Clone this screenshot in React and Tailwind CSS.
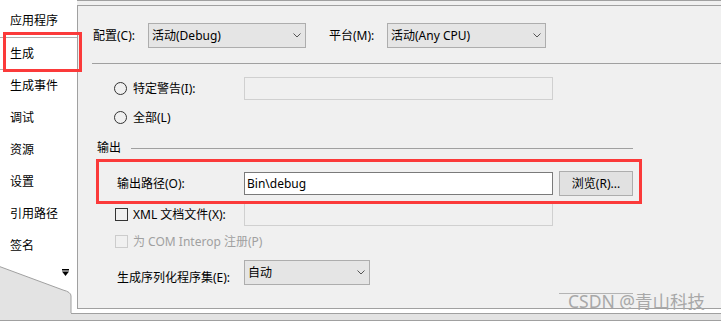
import React from 'react'

const FONT = { fontFamily: '"Noto Sans", "Noto Sans CJK SC", sans-serif' }

const NAV = ['应用程序', '生成', '生成事件', '调试', '资源', '设置', '引用路径', '签名']

function Chevron() {
  return (
    <svg width="8" height="5" viewBox="0 0 8 5" className="shrink-0">
      <polyline points="0.5,0.5 4,4 7.5,0.5" fill="none" stroke="#555" strokeWidth="1" />
    </svg>
  )
}

function Combo({ w, text }) {
  return (
    <div className={`${w} h-[25px] flex items-center justify-between pl-[3px] pr-[4px] bg-[#e5e5e5] border border-[#adadad] shrink-0`}>
      <span className="text-[12px] leading-none text-black">{text}</span>
      <Chevron />
    </div>
  )
}

function TextBox({ value, disabled }) {
  return (
    <div className={`w-[309px] h-[23px] flex items-center pl-[2px] shrink-0 border ${disabled ? 'bg-[#f0f0f0] border-[#d0d0d0]' : 'bg-white border-[#7a7a7a]'}`}>
      <span className="text-[12px] leading-none text-black">{value}</span>
    </div>
  )
}

function Radio() {
  return <div className="w-[13px] h-[13px] rounded-full border border-[#333] shrink-0" />
}

function Check({ disabled }) {
  return <div className={`w-[13px] h-[13px] border shrink-0 ${disabled ? 'border-[#cccccc]' : 'border-[#333]'}`} />
}

export default function App() {
  return (
    <div className="relative w-[721px] h-[322px] overflow-hidden bg-white flex flex-col" style={FONT}>
      <div className="h-[313px] flex">
        {/* sidebar */}
        <div className="w-[77px] flex flex-col">
          <div className="pt-[4px] flex flex-col">
            {NAV.map((n, i) => (
              <div
                key={n}
                className={`flex items-center pl-[10px] text-[12px] leading-none text-black ${i === 1 ? 'h-[33px] border-y border-[#b0b0b0]' : i === 0 ? 'h-[33px]' : 'h-[32px]'}`}
              >
                {n}
              </div>
            ))}
          </div>
          <svg width="77" height="51" viewBox="0 0 77 51" className="mt-auto">
            <path d="M0 4.7 L63 28 Q71 30 71 34 L71 51 L0 51 Z" fill="#e3e3e3" />
            <path d="M0 4.7 L63 28 Q71 30 71 34 L71 51" fill="none" stroke="#a0a0a0" strokeWidth="1" />
            <rect x="62" y="7" width="7" height="1.5" fill="#000" />
            <polygon points="62,9.5 69,9.5 65.5,14" fill="#000" />
          </svg>
        </div>

        {/* main */}
        <div className="flex-1 flex flex-col">
          <div className="h-[5px] border-t border-[#a0a0a0] bg-[#f0f0f0]" />
          <div className="h-[304px] bg-[#f0f0f0] border-l border-t border-b border-[#a0a0a0] flex flex-col text-[12px] leading-none text-black">
            <div className="mt-[17px] h-[25px] flex items-center">
              <span className="ml-[15px] w-[55px]">配置(C):</span>
              <Combo w="w-[158px]" text="活动(Debug)" />
              <span className="ml-[23px] w-[58px]">平台(M):</span>
              <Combo w="w-[159px]" text="活动(Any CPU)" />
            </div>

            <div className="mt-[15px] ml-[14px] h-px bg-[#a0a0a0]" />

            <div className="mt-[13px] h-[23px] flex items-center">
              <div className="ml-[36px] w-[130px] flex items-center gap-[6px]">
                <Radio />
                <span>特定警告(I):</span>
              </div>
              <TextBox disabled />
            </div>

            <div className="mt-[6px] h-[23px] flex items-center">
              <div className="ml-[36px] flex items-center gap-[6px]">
                <Radio />
                <span>全部(L)</span>
              </div>
            </div>

            <div className="mt-[11px] h-[16px] flex items-center">
              <span className="ml-[19px] w-[24px]">输出</span>
              <div className="ml-[10px] w-[502px] h-px bg-[#a0a0a0]" />
            </div>

            <div className="mt-[15px] h-[25px] flex items-center">
              <span className="ml-[39px] w-[127px]">输出路径(O):</span>
              <TextBox value="Bin\debug" />
              <div className="ml-[6px] w-[74px] h-[25px] flex items-center justify-center bg-[#e1e1e1] border border-[#adadad]">
                浏览(R)...
              </div>
            </div>

            <div className="mt-[7px] h-[23px] flex items-center">
              <div className="ml-[37px] w-[129px] flex items-center gap-[5px]">
                <Check />
                <span>XML 文档文件(X):</span>
              </div>
              <TextBox disabled />
            </div>

            <div className="mt-[4px] h-[23px] flex items-center">
              <div className="ml-[37px] flex items-center gap-[5px] text-[#a0a0a0]">
                <Check disabled />
                <span>为 COM Interop 注册(P)</span>
              </div>
            </div>

            <div className="mt-[7px] h-[25px] flex items-center">
              <span className="ml-[39px] w-[127px] pt-[11px]">生成序列化程序集(E):</span>
              <Combo w="w-[126px]" text="自动" />
            </div>

            <div className="mt-[8px] ml-[481px] w-[74px] h-px bg-[#b4b4b4]" />
          </div>
        </div>
      </div>

      {/* bottom strip */}
      <div className="h-[9px] flex border-b border-[#a0a0a0] bg-[#e3e3e3] mb-[1px]">
        <div className="w-[71px]" />
        <div className="flex-1 border-t border-[#a0a0a0]" />
      </div>

      {/* annotations */}
      <div className="absolute left-[3px] top-[32px] w-[79px] h-[40px] border-[3px] border-[#fb3a3a]" />
      <div className="absolute left-[96px] top-[159px] w-[546px] h-[45px] border-[3px] border-[#fb3a3a]" />
      <div className="absolute left-[568px] top-[293px] text-[17.5px] leading-none text-[#a8a8a8]">CSDN @青山科技</div>
    </div>
  )
}
